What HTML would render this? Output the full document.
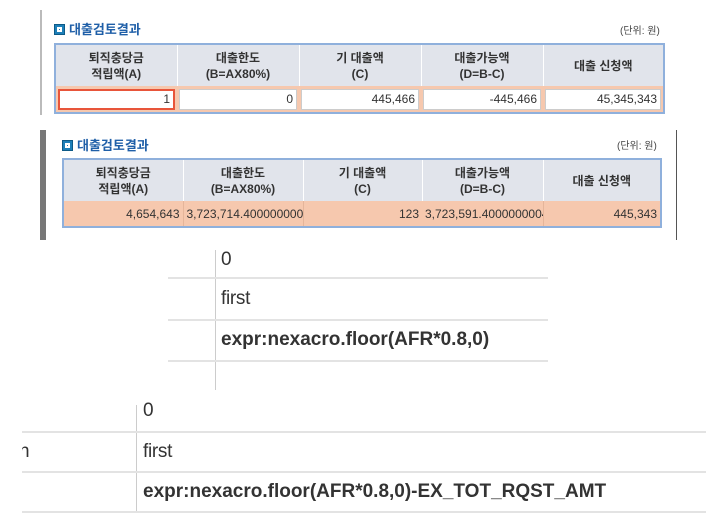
<!DOCTYPE html>
<html><head><meta charset="utf-8"><style>
body{margin:0;width:706px;height:513px;background:#fff;position:relative;overflow:hidden;font-family:"Liberation Sans","Noto Sans CJK KR",sans-serif}
.a{position:absolute}
.ttl{font-size:13px;font-weight:bold;color:#1f5fa8}
.ttl i{display:inline-block;width:9px;height:9px;background:#1d7fb8;border:1px solid #0d5a87;margin-right:4px;vertical-align:-1px;box-shadow:inset 0 0 0 2px #1d7fb8,inset 0 0 0 4px #fff}
.unit{font-size:10px;color:#444}
table{border-collapse:collapse;position:absolute;table-layout:fixed;border:2px solid #8fb0dc;font-size:12px;color:#333}
th{background:#e1e4eb;font-weight:bold;border-right:1px solid #fff;line-height:16px;padding:0;color:#333;font-size:12px}
td{background:#f6c8ae;padding:0;text-align:right;font-size:12px}
td div{background:#fff;border:1px solid #ccc;height:19px;line-height:19px;margin:2px;padding-right:3px}
.t{font-size:19px;color:#333;position:absolute;letter-spacing:-0.3px}
.b{font-weight:bold;letter-spacing:0}
.h{position:absolute;height:2px;background:#e3e3e3}
.v{position:absolute;width:1px;background:#ccc}
</style></head><body>
<div class="a" style="left:40px;top:10px;width:2px;height:105px;background:#bbb"></div>
<div class="a ttl" style="left:54px;top:19px"><i></i>대출검토결과</div>
<div class="a unit" style="left:620px;top:22px">(단위: 원)</div>
<table style="left:54px;top:43px;width:611px;height:71px">
<colgroup><col style="width:122px"><col style="width:122px"><col style="width:122px"><col style="width:122px"><col></colgroup>
<tr style="height:42px"><th>퇴직충당금<br>적립액(A)</th><th>대출한도<br>(B=AX80%)</th><th>기 대출액<br>(C)</th><th>대출가능액<br>(D=B-C)</th><th>대출 신청액</th></tr>
<tr><td><div style="border:2px solid #e8553a;height:17px;line-height:17px">1</div></td><td><div>0</div></td><td><div>445,466</div></td><td><div>-445,466</div></td><td><div>45,345,343</div></td></tr>
</table>

<div class="a" style="left:40px;top:130px;width:6px;height:110px;background:#777"></div>
<div class="a" style="left:676px;top:130px;width:1px;height:110px;background:#555"></div>
<div class="a ttl" style="left:62px;top:135px"><i></i>대출검토결과</div>
<div class="a unit" style="left:617px;top:137px">(단위: 원)</div>
<table style="left:62px;top:158px;width:600px;height:70px">
<colgroup><col style="width:120px"><col style="width:120px"><col style="width:119px"><col style="width:121px"><col></colgroup>
<tr style="height:42px"><th>퇴직충당금<br>적립액(A)</th><th>대출한도<br>(B=AX80%)</th><th>기 대출액<br>(C)</th><th>대출가능액<br>(D=B-C)</th><th>대출 신청액</th></tr>
<tr><td style="padding-right:3px;border-right:1px solid #e5b59a">4,654,643</td><td style="text-align:left;padding-left:3px;white-space:nowrap;overflow:hidden;text-overflow:clip;border-right:1px solid #e5b59a">3,723,714.4000000004</td><td style="padding-right:3px">123</td><td style="text-align:left;padding-left:3px;white-space:nowrap;overflow:hidden;text-overflow:clip;border-right:1px solid #e5b59a">3,723,591.4000000004</td><td style="padding-right:3px">445,343</td></tr>
</table>

<div class="v" style="left:215px;top:250px;height:140px"></div>
<div class="h" style="left:168px;top:277px;width:380px"></div>
<div class="h" style="left:168px;top:319px;width:380px"></div>
<div class="h" style="left:168px;top:360px;width:380px"></div>
<div class="t" style="left:221px;top:249px">0</div>
<div class="t" style="left:221px;top:288px">first</div>
<div class="t b" style="left:221px;top:329px">expr:nexacro.floor(AFR*0.8,0)</div>

<div class="v" style="left:136px;top:405px;height:108px"></div>
<div class="h" style="left:22px;top:431px;width:684px"></div>
<div class="h" style="left:22px;top:471px;width:684px"></div>
<div class="h" style="left:22px;top:511px;width:684px"></div>
<div class="t" style="left:143px;top:400px">0</div>
<div class="a" style="left:22px;top:441px;width:8px;height:26px;overflow:hidden"><div class="t" style="left:-3px;top:0">n</div></div>
<div class="t" style="left:143px;top:441px">first</div>
<div class="t b" style="left:143px;top:481px">expr:nexacro.floor(AFR*0.8,0)-EX_TOT_RQST_AMT</div>
</body></html>
